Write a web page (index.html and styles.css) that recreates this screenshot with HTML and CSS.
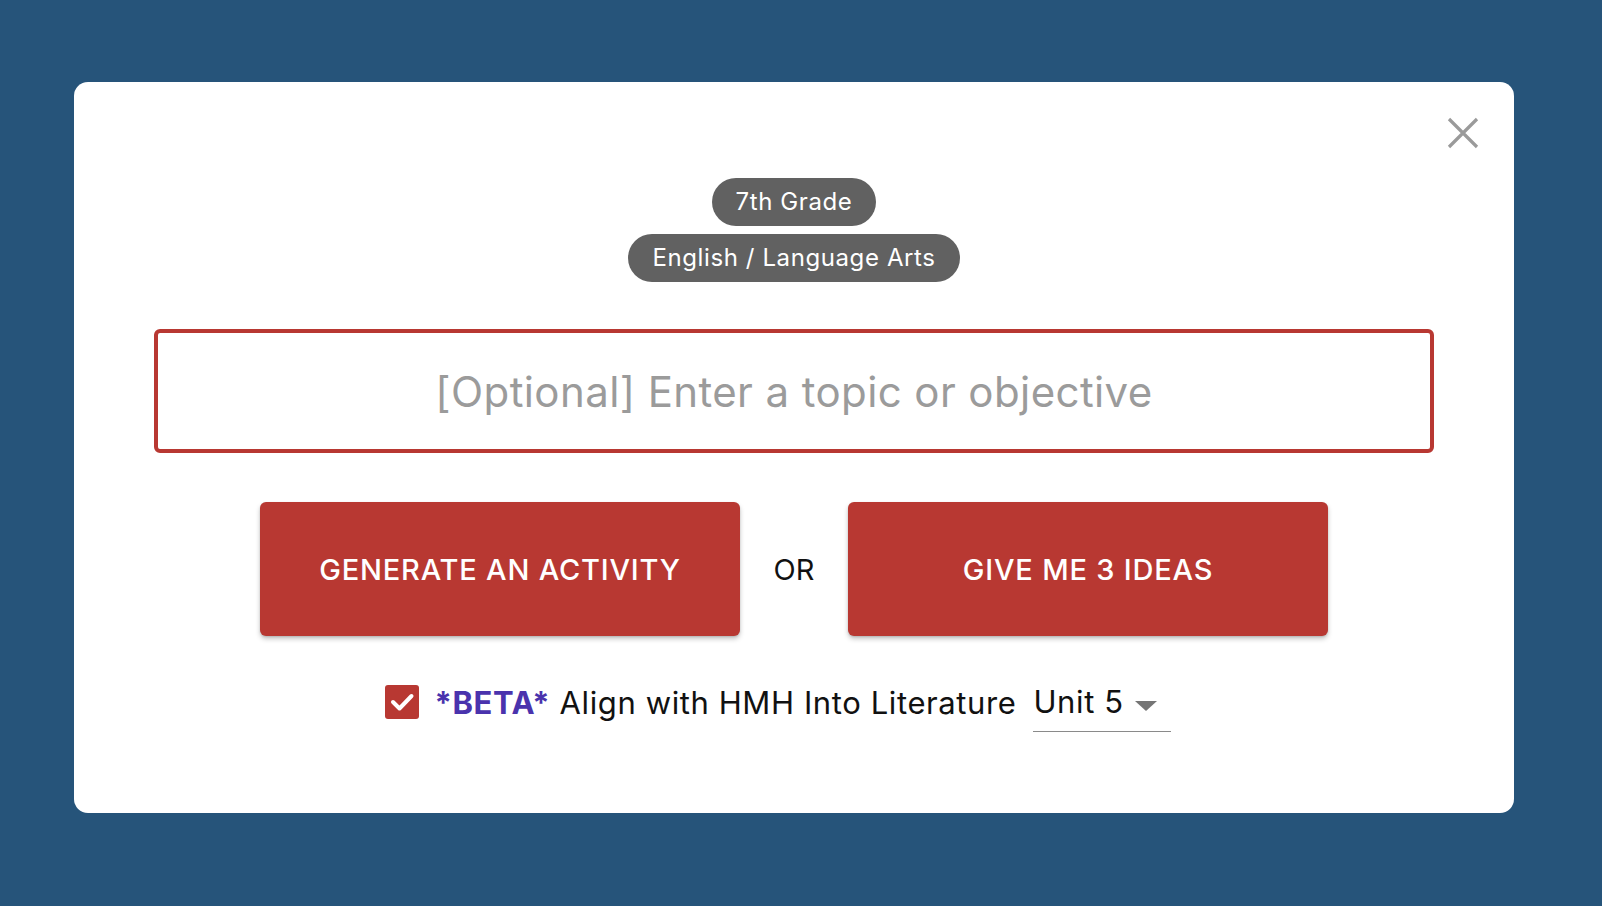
FILE: index.html
```html
<!DOCTYPE html>
<html lang="en">
<head>
<meta charset="utf-8">
<title>Generate Activity</title>
<link rel="stylesheet" href="styles.css">
</head>
<body>
<div class="modal">
  <button class="close" aria-label="Close">
    <svg width="32" height="32" viewBox="0 0 32 32"><path d="M2 2 L30 30 M30 2 L2 30" stroke="#9a9a9a" stroke-width="3.2" fill="none"/></svg>
  </button>
  <div class="pills">
    <span class="pill">7th Grade</span>
    <span class="pill">English / Language Arts</span>
  </div>
  <div class="topic">
    <input type="text" placeholder="[Optional] Enter a topic or objective">
  </div>
  <div class="actions">
    <button class="btn">GENERATE AN ACTIVITY</button>
    <span class="or">OR</span>
    <button class="btn">GIVE ME 3 IDEAS</button>
  </div>
  <div class="align-row">
    <span class="check">
      <svg width="34" height="34" viewBox="0 0 34 34"><path d="M8 17 L14.5 23.5 L26.5 11" stroke="#fff" stroke-width="4" fill="none" stroke-linecap="round" stroke-linejoin="round"/></svg>
    </span>
    <span class="label"><b class="beta">*BETA*</b> Align with HMH Into Literature</span>
    <span class="select">
      <span class="select-value">Unit 5</span>
      <span class="caret"></span>
    </span>
  </div>
</div>
</body>
</html>
```

FILE: styles.css
```css
html, body {
  margin: 0;
  padding: 0;
}
body {
  background: #26547a;
  width: 1602px;
  height: 906px;
  overflow: hidden;
  padding: 82px 0 0 74px;
  box-sizing: border-box;
  font-family: Inter, "Noto Sans", sans-serif;
}
.modal {
  position: relative;
  width: 1440px;
  height: 731px;
  background: #fff;
  border-radius: 14px;
  box-sizing: border-box;
  padding-top: 96px;
  display: flex;
  flex-direction: column;
  align-items: center;
}
.close {
  position: absolute;
  top: 35px;
  right: 35px;
  width: 32px;
  height: 32px;
  padding: 0;
  border: 0;
  background: none;
}
.close svg { display: block; }
.pills {
  display: flex;
  flex-direction: column;
  align-items: center;
  gap: 8px;
}
.pill {
  height: 48px;
  line-height: 48px;
  padding: 0 24px;
  border-radius: 24px;
  background: #616161;
  color: #fff;
  font-size: 24px;
  letter-spacing: 0.6px;
}
.topic {
  margin-top: 47px;
  width: 1280px;
}
.topic input {
  display: block;
  width: 100%;
  height: 124px;
  box-sizing: border-box;
  border: 4px solid #b83832;
  border-radius: 6px;
  text-align: center;
  font-family: inherit;
  font-size: 42px;
  letter-spacing: 0.4px;
  color: #333;
  outline: none;
  padding: 0 20px;
}
.topic input::placeholder {
  color: #9b9b9b;
  opacity: 1;
}
.actions {
  margin-top: 49px;
  display: flex;
  align-items: center;
}
.btn {
  width: 480px;
  height: 134px;
  border: 0;
  border-radius: 6px;
  background: #b83832;
  color: #fff;
  font-family: inherit;
  font-size: 29px;
  font-weight: 500;
  letter-spacing: 0.8px;
  box-shadow: 0 3px 5px rgba(0,0,0,0.22), 0 1px 2px rgba(0,0,0,0.12);
}
.or {
  width: 108px;
  text-align: center;
  font-size: 29px;
  color: #111;
}
.align-row {
  margin-top: 36px;
  display: flex;
  align-items: center;
  padding-right: 32px;
}
.check {
  width: 34px;
  height: 34px;
  border-radius: 3px;
  background: #b83832;
  margin-right: 16px;
}
.check svg { display: block; }
.label {
  font-size: 31px;
  letter-spacing: 0.6px;
  color: #111;
  white-space: nowrap;
}
.beta {
  color: #4a33ad;
  font-weight: 700;
}
.select {
  margin-left: 17px;
  margin-top: 10px;
  width: 138px;
  height: 50px;
  border-bottom: 1px solid #8a8a8a;
  display: flex;
  align-items: flex-start;
  box-sizing: border-box;
}
.select-value {
  font-size: 31px;
  letter-spacing: 0.6px;
  line-height: 40px;
  color: #111;
}
.caret {
  margin-left: 11px;
  margin-top: 19px;
  width: 0;
  height: 0;
  border-left: 11px solid transparent;
  border-right: 11px solid transparent;
  border-top: 10px solid #757575;
}
```
